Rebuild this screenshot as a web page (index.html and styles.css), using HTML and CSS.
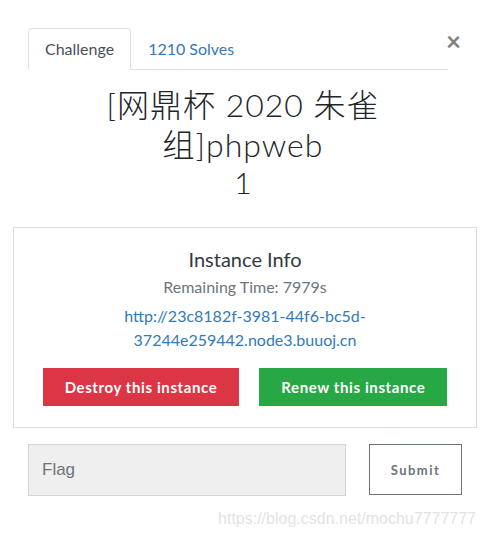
FILE: index.html
```html
<!DOCTYPE html>
<html lang="zh">
<head>
  <meta charset="UTF-8" />
  <meta name="viewport" content="width=device-width, initial-scale=1.0">
  <title>Challenge - phpweb</title>
  <link rel="stylesheet" href="styles.css">
</head>
<body>
  <div class="modal">
    <div class="modal-head">
      <ul class="tabs">
        <li class="tab active">Challenge</li>
        <li class="tab"><a href="#solves">1210 Solves</a></li>
      </ul>
      <button class="close" type="button">&times;</button>
    </div>

    <h2 class="chal-name">[网鼎杯 2020 朱雀组]phpweb</h2>
    <h3 class="chal-value">1</h3>

    <!-- Instance Info -->
    <div class="instance">
      <h4>Instance Info</h4>
      <p class="remaining">Remaining Time: 7979s</p>
      <a class="instance-url" href="#">http://23c8182f-3981-44f6-bc5d-37244e259442.node3.buuoj.cn</a>
      <div class="instance-actions">
        <button class="btn btn-danger" type="button">Destroy this instance</button>
        <button class="btn btn-success" type="button">Renew this instance</button>
      </div>
    </div>

    <form class="flag-form">
      <input type="text" class="flag-input" placeholder="Flag" />
      <button class="btn-submit" type="button">Submit</button>
    </form>

    <div class="watermark">https://blog.csdn.net/mochu7777777</div>
  </div>
</body>
</html>
```

FILE: styles.css
```css
body {
  margin: 0;
  background: #fff;
  font-family: Lato, "Noto Sans CJK SC", sans-serif;
  color: #212529;
}

.modal {
  width: 486px;
  padding-top: 28px;
}

.modal-head {
  display: flex;
  align-items: flex-start;
  padding: 0 25px 0 28px;
}

.tabs {
  flex: 1;
  display: flex;
  list-style: none;
  margin: 0;
  padding: 0;
  border-bottom: 1px solid #dee2e6;
}

.tab {
  padding: 10px 16px;
  margin-bottom: -1px;
  font-size: 16px;
  line-height: 20px;
  border: 1px solid transparent;
  border-radius: 4px 4px 0 0;
}

.tab.active {
  color: #495057;
  border-color: #dee2e6 #dee2e6 #fff;
  background: #fff;
}

.tab a {
  color: #337ab7;
  text-decoration: none;
}

.close {
  border: none;
  background: none;
  padding: 0;
  margin: 5px 3px 0 -2px;
  width: 12px;
  font-family: Lato, sans-serif;
  font-size: 26px;
  line-height: 16px;
  font-weight: 700;
  color: #000;
  opacity: .5;
  cursor: pointer;
}

.chal-name {
  max-width: 300px;
  margin: 15px auto 0;
  text-align: center;
  font-size: 32px;
  line-height: 40px;
  font-weight: 300;
  letter-spacing: 1px;
}

.chal-value {
  margin: 0;
  text-align: center;
  font-size: 30px;
  line-height: 34px;
  font-weight: 300;
}

.instance {
  margin: 28px 9px 0 13px;
  padding: 19px 20px 21px;
  border: 1px solid #dcdcdc;
  text-align: center;
}

.instance h4 {
  margin: 0 0 4px;
  font-size: 20px;
  line-height: 24px;
  font-weight: 400;
  color: #343a40;
}

.remaining {
  margin: 0 0 5px;
  font-size: 16px;
  line-height: 24px;
  color: #6c757d;
}

.instance-url {
  display: block;
  max-width: 270px;
  margin: 0 auto;
  font-size: 16px;
  line-height: 24px;
  color: #337ab7;
  text-decoration: none;
}

.instance-actions {
  display: flex;
  justify-content: center;
  gap: 20px;
  margin-top: 16px;
}

.btn {
  height: 38px;
  padding: 0 22px;
  border: none;
  border-radius: 0;
  color: #fff;
  font-family: Lato, sans-serif;
  font-size: 15px;
  font-weight: 700;
  letter-spacing: .6px;
}

.btn-danger {
  background: #dc3545;
}

.btn-success {
  background: #28a745;
}

.flag-form {
  display: flex;
  gap: 23px;
  margin: 16px 0 0 28px;
}

.flag-input {
  box-sizing: border-box;
  width: 318px;
  height: 52px;
  padding: 0 13px;
  border: 1px solid #d4d4d8;
  background: #efefef;
  font-family: "Liberation Sans", Arial, sans-serif;
  font-size: 17px;
}

.flag-input::placeholder {
  color: #6f7377;
}

.btn-submit {
  box-sizing: border-box;
  width: 93px;
  height: 51px;
  border: 1px solid #6c757d;
  background: #fff;
  color: #6c757d;
  font-family: Lato, sans-serif;
  font-size: 13px;
  font-weight: 700;
  letter-spacing: 1.5px;
}

.watermark {
  margin: 14px 10px 0 0;
  text-align: right;
  font-family: "Liberation Sans", Arial, sans-serif;
  font-size: 16px;
  color: #e3e3e3;
}
```
